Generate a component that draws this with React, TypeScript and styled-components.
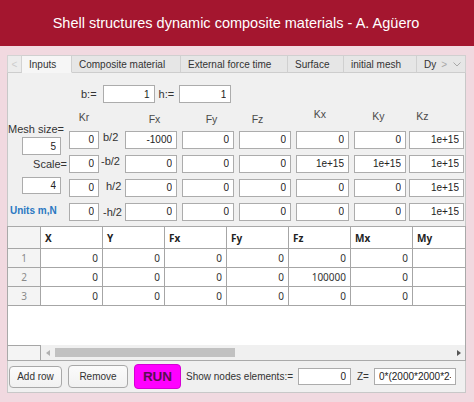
import React from "react";
import styled, { createGlobalStyle } from "styled-components";

const Global = createGlobalStyle`
  html, body { margin: 0; padding: 0; }
  body { background: #f1d9e0; font-family: "Liberation Sans", Arial, sans-serif; }
  * { box-sizing: border-box; }
`;

const Page = styled.div`
  width: 474px;
  height: 402px;
  background: #f1d9e0;
  display: flex;
  flex-direction: column;
  overflow: hidden;
`;

const Header = styled.header`
  height: 46px;
  flex: none;
  background: #a4162f;
  color: #ffffff;
  display: flex;
  align-items: center;
  justify-content: center;
  font-size: 14.5px;
  padding-right: 2px;
`;

const Main = styled.main`
  flex: 1;
  padding: 9px 8px 9px 7px;
  display: flex;
  flex-direction: column;
`;

const TabBar = styled.div`
  height: 18px;
  display: flex;
  flex: none;
`;

const TabScroll = styled.div`
  width: 15px;
  flex: none;
  background: #ececec;
  border: 1px solid #d3d3d3;
  border-bottom: 1px solid #cdcdcd;
  display: flex;
  align-items: center;
  justify-content: center;
  color: #cdcdcd;
  font-size: 10px;
`;

const Tab = styled.div<{ $w: number; $active?: boolean }>`
  width: ${(p) => p.$w}px;
  flex: none;
  background: ${(p) => (p.$active ? "#f6f6f6" : "#e6e6e6")};
  border-top: 1px solid #d0d0d0;
  border-right: 1px solid #d0d0d0;
  border-bottom: 1px solid ${(p) => (p.$active ? "#f6f6f6" : "#cdcdcd")};
  padding-left: 7px;
  display: flex;
  align-items: center;
  font-size: 10px;
  color: #333;
  white-space: nowrap;
  overflow: hidden;
`;

const TabArrows = styled.span`
  margin-left: 5px;
  display: flex;
  align-items: center;
  gap: 6px;
  color: #a8a8a8;
  font-size: 10px;
`;

const Panel = styled.section`
  flex: 1;
  background: #f0f0f0;
  border: 1px solid #c8c8c8;
  border-top: none;
  display: flex;
  flex-direction: column;
`;

const BHRow = styled.div`
  margin-top: 12px;
  height: 18px;
  display: flex;
  align-items: center;
  padding-left: 73px;
`;

const Label = styled.span<{ $ml?: number; $mr?: number }>`
  font-size: 11px;
  color: #333;
  margin-left: ${(p) => p.$ml ?? 0}px;
  margin-right: ${(p) => p.$mr ?? 0}px;
  white-space: nowrap;
`;

const Field = styled.input<{ $w: number; $h?: number }>`
  width: ${(p) => p.$w}px;
  height: ${(p) => p.$h ?? 18}px;
  border: 1px solid #acacac;
  background: #ffffff;
  text-align: right;
  padding: 0 4px 0 2px;
  font-family: "Liberation Sans", Arial, sans-serif;
  font-size: 10px;
  color: #222;
  outline: none;
  margin: 0;
  border-radius: 0;
`;

const ParamGrid = styled.div`
  display: grid;
  grid-template-columns: 61px 30px 26px 57px 57px 57px 58px 55px 55px;
  grid-template-rows: 26px 24px 24px 24px 18px;
  height: 116px;
`;

const LeftCol = styled.div`
  grid-column: 1;
  grid-row: 1 / -1;
  display: flex;
  flex-direction: column;
`;

const LeftLabel = styled.span<{ $mt: number; $right?: number }>`
  margin-top: ${(p) => p.$mt}px;
  font-size: 11px;
  line-height: 14px;
  color: #333;
  text-align: right;
  padding-right: ${(p) => p.$right ?? 0}px;
  white-space: nowrap;
`;

const LeftField = styled(Field)<{ $mt: number }>`
  margin-top: ${(p) => p.$mt}px;
  margin-left: 14px;
`;

const UnitsLabel = styled.span`
  margin-top: 10px;
  margin-left: 2px;
  font-size: 10px;
  line-height: 14px;
  font-weight: bold;
  color: #2a78c2;
`;

const ColHead = styled.span<{ $dx: number; $dy: number; $col: number }>`
  grid-row: 1;
  grid-column: ${(p) => p.$col};
  align-self: center;
  justify-self: center;
  transform: translate(${(p) => p.$dx}px, ${(p) => p.$dy}px);
  font-size: 10.5px;
  color: #4a4a4a;
`;

const Cell = styled.div<{ $row: number; $col: number }>`
  grid-row: ${(p) => p.$row};
  grid-column: ${(p) => p.$col};
  align-self: start;
`;

const SideLabel = styled.span<{ $row: number; $dy: number; $dx: number }>`
  grid-row: ${(p) => p.$row};
  grid-column: 3;
  align-self: start;
  margin-top: ${(p) => 2 + p.$dy}px;
  margin-left: ${(p) => p.$dx}px;
  font-size: 11px;
  color: #333;
`;

const TableWrap = styled.div`
  margin: 7px -1px 0;
  height: 135px;
  border: 1px solid #a9a9a9;
  background: #ffffff;
  display: flex;
  flex-direction: column;
  flex: none;
`;

const TableView = styled.div`
  flex: 1;
  overflow: hidden;
`;

const Grid = styled.table`
  border-collapse: separate;
  border-spacing: 0;
  table-layout: fixed;
  width: 467px;
  font-family: "Noto Sans", "Open Sans", sans-serif;
  font-size: 10px;
`;

const HeadRow = styled.tr`
  height: 22px;
`;
const BodyRow = styled.tr`
  height: 19px;
`;

const HeadCell = styled.th`
  border-right: 1px solid #a6a6a6;
  border-bottom: 1px solid #a6a6a6;
  text-align: left;
  padding: 0 0 0 4px;
  font-weight: bold;
  color: #222;
  background: #ffffff;
`;

const Corner = styled.th`
  border-right: 1px solid #a6a6a6;
  border-bottom: 1px solid #a6a6a6;
  background: #f4f4f4;
`;

const RowNum = styled.td`
  border-right: 1px solid #a6a6a6;
  border-bottom: 1px solid #a6a6a6;
  background: #f4f4f4;
  text-align: center;
  color: #8a8a8a;
  padding: 0;
`;

const ValCell = styled.td`
  border-right: 1px solid #a6a6a6;
  border-bottom: 1px solid #a6a6a6;
  text-align: right;
  padding: 0 4px 0 0;
  color: #333;
`;

const ScrollRow = styled.div`
  height: 15px;
  display: flex;
  flex: none;
  background: #f0f0f0;
`;

const ScrollCorner = styled.div`
  width: 33px;
  border-top: 1px solid #a6a6a6;
  border-right: 1px solid #a6a6a6;
  background: #f4f4f4;
`;

const ScrollTrack = styled.div`
  flex: 1;
  display: flex;
  align-items: center;
  padding: 0 4px 0 5px;
`;

const ScrollThumb = styled.div`
  margin-left: 5px;
  width: 180px;
  height: 9px;
  background: #c1c1c1;
`;

const Spacer = styled.div`
  flex: 1;
`;

const BottomBar = styled.div`
  flex: 1;
  display: flex;
  align-items: center;
  padding-left: 1px;
`;

const Button = styled.button<{ $w: number; $h: number; $ml: number }>`
  width: ${(p) => p.$w}px;
  height: ${(p) => p.$h}px;
  margin-left: ${(p) => p.$ml}px;
  border: 1px solid #a8a8a8;
  border-radius: 4px;
  background: linear-gradient(#fbfbfb, #f1f1f1);
  font-family: "Liberation Sans", Arial, sans-serif;
  font-size: 10px;
  color: #333;
  padding: 0;
`;

const RunButton = styled(Button)`
  background: #ff00ff;
  border-color: #d400d4;
  color: #5a0f4f;
  font-weight: bold;
  font-size: 13.5px;
`;

const BarLabel = styled.span<{ $ml: number }>`
  margin-left: ${(p) => p.$ml}px;
  font-size: 10px;
  color: #333;
  white-space: nowrap;
`;

const BarField = styled(Field)<{ $ml: number }>`
  margin-left: ${(p) => p.$ml}px;
`;

const ZField = styled(BarField)`
  text-align: left;
  padding-left: 4px;
  overflow: hidden;
`;

const Tri = ({ dir, color }: { dir: "l" | "r"; color: string }) => (
  <svg width="4" height="6" viewBox="0 0 4 6">
    <path d={dir === "l" ? "M4 0 L0 3 L4 6 Z" : "M0 0 L4 3 L0 6 Z"} fill={color} />
  </svg>
);

const headers = ["X", "Y", "Fx", "Fy", "Fz", "Mx", "My"];
const rows = [
  ["0", "0", "0", "0", "0", "0", ""],
  ["0", "0", "0", "0", "100000", "0", ""],
  ["0", "0", "0", "0", "0", "0", ""],
];

const colHeads = [
  { t: "Kr", col: 2, dx: 0, dy: 1 },
  { t: "Fx", col: 4, dx: 1, dy: 3 },
  { t: "Fy", col: 5, dx: 1, dy: 3 },
  { t: "Fz", col: 6, dx: -10, dy: 3 },
  { t: "Kx", col: 7, dx: -5, dy: -2 },
  { t: "Ky", col: 8, dx: -3, dy: 0 },
  { t: "Kz", col: 9, dx: -14, dy: 0 },
];

const gridRows = [
  { side: "b/2", sdx: 4, sdy: 0, kr: "0", vals: ["-1000", "0", "0", "0", "0", "1e+15"] },
  { side: "-b/2", sdx: 2, sdy: 0, kr: "0", vals: ["0", "0", "0", "1e+15", "1e+15", "1e+15"] },
  { side: "h/2", sdx: 7, sdy: 1, kr: "0", vals: ["0", "0", "0", "0", "0", "1e+15"] },
  { side: "-h/2", sdx: 4, sdy: 3, kr: "0", vals: ["0", "0", "0", "0", "0", "1e+15"] },
];

const valueWidths = [52, 52, 52, 53, 52, 55];

export default function App() {
  return (
    <Page>
      <Global />
      <Header>Shell structures dynamic composite materials - A. Agüero</Header>
      <Main>
        <TabBar>
          <TabScroll>&lt;</TabScroll>
          <Tab $w={50} $active>Inputs</Tab>
          <Tab $w={109}>Composite material</Tab>
          <Tab $w={107}>External force time</Tab>
          <Tab $w={56}>Surface</Tab>
          <Tab $w={73}>initial mesh</Tab>
          <Tab $w={49}>
            Dy
            <TabArrows>
              <span>&gt;</span>
              <svg width="8" height="5" viewBox="0 0 8 5">
                <path d="M0.5 0.5 L4 4 L7.5 0.5" fill="none" stroke="#a8a8a8" strokeWidth="1" />
              </svg>
            </TabArrows>
          </Tab>
        </TabBar>
        <Panel>
          <BHRow>
            <Label $mr={6}>b:=</Label>
            <Field $w={52} readOnly value="1" />
            <Label $ml={4} $mr={5}>h:=</Label>
            <Field $w={52} readOnly value="1" />
          </BHRow>
          <ParamGrid>
            <LeftCol>
              <LeftLabel $mt={19} $right={6}>Mesh size=</LeftLabel>
              <LeftField $mt={1} $w={39} readOnly value="5" />
              <LeftLabel $mt={2} $right={2}>Scale=</LeftLabel>
              <LeftField $mt={6} $w={39} $h={17} readOnly value="4" />
              <UnitsLabel>Units m,N</UnitsLabel>
            </LeftCol>
            {colHeads.map((h) => (
              <ColHead key={h.t} $col={h.col} $dx={h.dx} $dy={h.dy}>
                {h.t}
              </ColHead>
            ))}
            {gridRows.map((r, i) => (
              <React.Fragment key={i}>
                <Cell $row={i + 2} $col={2}>
                  <Field $w={30} readOnly value={r.kr} />
                </Cell>
                <SideLabel $row={i + 2} $dx={r.sdx} $dy={r.sdy}>
                  {r.side}
                </SideLabel>
                {r.vals.map((v, j) => (
                  <Cell key={j} $row={i + 2} $col={4 + j}>
                    <Field $w={valueWidths[j]} readOnly value={v} />
                  </Cell>
                ))}
              </React.Fragment>
            ))}
          </ParamGrid>
          <TableWrap>
            <TableView>
              <Grid>
                <colgroup>
                  <col style={{ width: 33 }} />
                  {headers.map((h) => (
                    <col key={h} style={{ width: 62 }} />
                  ))}
                </colgroup>
                <thead>
                  <HeadRow>
                    <Corner />
                    {headers.map((h) => (
                      <HeadCell key={h}>{h}</HeadCell>
                    ))}
                  </HeadRow>
                </thead>
                <tbody>
                  {rows.map((r, i) => (
                    <BodyRow key={i}>
                      <RowNum>{i + 1}</RowNum>
                      {r.map((v, j) => (
                        <ValCell key={j}>{v}</ValCell>
                      ))}
                    </BodyRow>
                  ))}
                </tbody>
              </Grid>
            </TableView>
            <ScrollRow>
              <ScrollCorner />
              <ScrollTrack>
                <Tri dir="l" color="#b0b0b0" />
                <ScrollThumb />
                <Spacer />
                <Tri dir="r" color="#555" />
              </ScrollTrack>
            </ScrollRow>
          </TableWrap>
          <BottomBar>
            <Button $w={53} $h={22} $ml={0}>Add row</Button>
            <Button $w={60} $h={23} $ml={6}>Remove</Button>
            <RunButton $w={47} $h={25} $ml={6}>RUN</RunButton>
            <BarLabel $ml={5}>Show nodes elements:=</BarLabel>
            <BarField $ml={5} $w={53} $h={17} readOnly value="0" />
            <BarLabel $ml={6}>Z=</BarLabel>
            <ZField $ml={5} $w={82} $h={17} readOnly value="0*(2000*2000*2-1000*1000*2)" />
          </BottomBar>
        </Panel>
      </Main>
    </Page>
  );
}
